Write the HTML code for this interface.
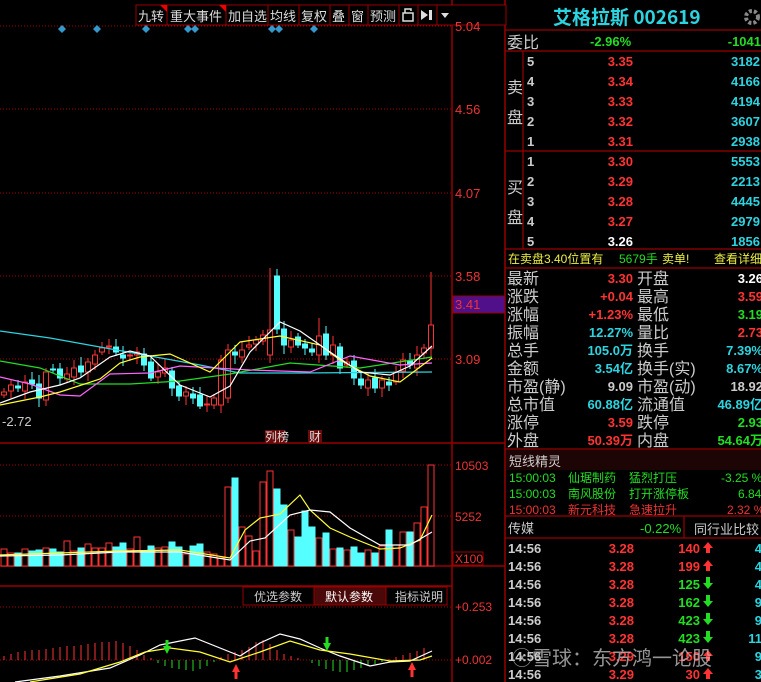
<!DOCTYPE html>
<html><head><meta charset="utf-8"><style>
html,body{margin:0;padding:0;background:#000;width:761px;height:682px;overflow:hidden}
svg{display:block}
text{font-family:"Liberation Sans","Noto Sans CJK SC",sans-serif}
.c{font-family:"Noto Sans CJK SC","WenQuanYi Zen Hei",sans-serif}
.n{font-family:"Liberation Sans",sans-serif;font-weight:bold}
</style></head><body>
<svg id="s" width="761" height="682" xmlns="http://www.w3.org/2000/svg">
<rect width="761" height="682" fill="#000"/>
<g stroke="#a00" stroke-dasharray="1,2" stroke-width="1">
<line x1="0" y1="26" x2="452" y2="26"/>
<line x1="0" y1="109" x2="452" y2="109"/>
<line x1="0" y1="193" x2="452" y2="193"/>
<line x1="0" y1="276" x2="452" y2="276"/>
<line x1="0" y1="359" x2="452" y2="359"/>
<line x1="0" y1="465" x2="452" y2="465"/>
<line x1="0" y1="516" x2="452" y2="516"/>
<line x1="0" y1="607" x2="452" y2="607"/>
<line x1="0" y1="660" x2="452" y2="660"/>
</g>
<g stroke="#900" stroke-width="1.5">
<line x1="452" y1="0" x2="452" y2="682"/>
<line x1="0" y1="443" x2="505" y2="443"/>
<line x1="0" y1="566" x2="505" y2="566"/>
<line x1="0" y1="586" x2="452" y2="586"/>
<line x1="505" y1="0" x2="505" y2="682"/>
</g>
<g class="c" font-size="13" fill="#ddd">
<rect x="136" y="5" width="370" height="20" fill="#000" stroke="#900"/>
<g stroke="#900"><line x1="167" y1="5" x2="167" y2="25"/><line x1="226" y1="5" x2="226" y2="25"/><line x1="268" y1="5" x2="268" y2="25"/><line x1="299" y1="5" x2="299" y2="25"/><line x1="330" y1="5" x2="330" y2="25"/><line x1="349" y1="5" x2="349" y2="25"/><line x1="368" y1="5" x2="368" y2="25"/><line x1="399" y1="5" x2="399" y2="25"/><line x1="418" y1="5" x2="418" y2="25"/><line x1="437" y1="5" x2="437" y2="25"/></g>
<polygon points="160,5 167,5 167,12" fill="#e00"/><polygon points="219,5 226,5 226,12" fill="#e00"/>
<text x="138" y="21">九转</text><text x="170" y="21">重大事件</text><text x="228" y="21">加自选</text><text x="270" y="21">均线</text><text x="301" y="21">复权</text><text x="332" y="21">叠</text><text x="351" y="21">窗</text><text x="370" y="21">预测</text>
<rect x="403" y="13" width="10" height="8" fill="none" stroke="#ddd" stroke-width="1.5"/><path d="M405,13 v-4 h6 v2" fill="none" stroke="#ddd" stroke-width="1.5"/>
<polygon points="421,10 428,15 421,20" fill="#ddd"/><rect x="429" y="10" width="3" height="10" fill="#ddd"/>
<polygon points="441,13 449,13 445,18" fill="#ddd"/>
</g>
<g fill="#39c"><g id="dm"></g></g>
<g font-size="13" fill="#e33">
<text x="455" y="31">5.04</text><text x="455" y="114">4.56</text><text x="455" y="198">4.07</text><text x="455" y="281">3.58</text><text x="455" y="364">3.09</text>
<rect x="453" y="296" width="52" height="17" fill="#50108a" stroke="#900"/><text x="455" y="309">3.41</text>
<text x="455" y="470" font-size="12">10503</text><text x="455" y="521" font-size="12">5252</text>
<rect x="453" y="552" width="30" height="13" fill="none" stroke="#900"/><text x="455" y="563" font-size="12">X100</text>
<text x="455" y="611" font-size="12">+0.253</text><text x="455" y="664" font-size="12">+0.002</text>
</g>
<text x="2" y="426" font-size="13" fill="#ccc">-2.72</text>
<g class="c" font-size="12"><rect x="265" y="430" width="20" height="13" fill="#6a0a0a"/><text x="265" y="441" fill="#ddd">列榜</text><rect x="308" y="430" width="14" height="13" fill="#6a0a0a"/><text x="309" y="441" fill="#ddd">财</text></g>
<g class="c" font-size="12">
<rect x="243" y="587" width="71" height="18" fill="#000" stroke="#900"/><text x="254" y="601" fill="#ccc">优选参数</text>
<rect x="314" y="587" width="72" height="18" fill="#4a0808" stroke="#900"/><text x="325" y="601" fill="#fff">默认参数</text>
<rect x="386" y="587" width="61" height="18" fill="#000" stroke="#900"/><text x="395" y="601" fill="#ccc">指标说明</text>
</g>
<g id="chart"></g>
<text x="553" y="24" class="c" font-size="19" font-weight="bold" fill="#2cd4e0">艾格拉斯 002619</text>
<circle cx="752" cy="17" r="6" fill="none" stroke="#888" stroke-width="4" stroke-dasharray="3,2"/>
<g stroke="#900" stroke-width="1.2" fill="none">
<line x1="505" y1="30" x2="761" y2="30"/><line x1="505" y1="51" x2="761" y2="51"/><line x1="505" y1="151" x2="761" y2="151"/><line x1="505" y1="249" x2="761" y2="249"/><line x1="505" y1="268" x2="761" y2="268"/><line x1="523" y1="51" x2="523" y2="249"/>
<line x1="505" y1="449" x2="761" y2="449"/><line x1="505" y1="516" x2="761" y2="516"/><line x1="505" y1="538" x2="761" y2="538"/><line x1="684" y1="516" x2="684" y2="538"/>
</g>
<rect x="506" y="450" width="255" height="20" fill="#1e0505"/>
<g class="c" font-size="16" fill="#ccc">
<text x="507" y="48">委比</text><text x="507" y="93">卖</text><text x="507" y="123">盘</text><text x="507" y="193">买</text><text x="507" y="223">盘</text>
</g>
<g class="n" font-size="13">
<text x="590" y="46" fill="#2d2">-2.96%</text><text x="761" y="46" fill="#2d2" text-anchor="end">-1041</text>
<g fill="#ccc"><text x="527" y="66">5</text><text x="527" y="86">4</text><text x="527" y="106">3</text><text x="527" y="126">2</text><text x="527" y="146">1</text><text x="527" y="166">1</text><text x="527" y="186">2</text><text x="527" y="206">3</text><text x="527" y="226">4</text><text x="527" y="246">5</text></g>
<g fill="#f33" text-anchor="end"><text x="633" y="66">3.35</text><text x="633" y="86">3.34</text><text x="633" y="106">3.33</text><text x="633" y="126">3.32</text><text x="633" y="146">3.31</text><text x="633" y="166">3.30</text><text x="633" y="186">3.29</text><text x="633" y="206">3.28</text><text x="633" y="226">3.27</text><text x="633" y="246" fill="#fff">3.26</text></g>
<g fill="#2cd4e0"><text x="731" y="66">3182</text><text x="731" y="86">4166</text><text x="731" y="106">4194</text><text x="731" y="126">3607</text><text x="731" y="146">2938</text><text x="731" y="166">5553</text><text x="731" y="186">2213</text><text x="731" y="206">4445</text><text x="731" y="226">2979</text><text x="731" y="246">1856</text></g>
</g>
<g class="c" font-size="12"><text x="508" y="263" fill="#ee4">在卖盘3.40位置有</text><text x="619" y="263" fill="#2d2">5679手</text><text x="662" y="263" fill="#ee4">卖单!</text><text x="714" y="263" fill="#ee4">查看详细</text></g>
<g class="c" font-size="16" fill="#ccc" id="lab"></g>
<g class="n" font-size="13" id="val"></g>
<text x="509" y="466" class="c" font-size="13" fill="#ccc">短线精灵</text>
<g font-size="12" class="c">
<text x="509" y="482" fill="#2d2">15:00:03</text><text x="568" y="482" fill="#2d2">仙琚制药</text><text x="629" y="482" fill="#2d2">猛烈打压</text><text x="721" y="482" fill="#2d2">-3.25 %</text>
<text x="509" y="498" fill="#2d2">15:00:03</text><text x="568" y="498" fill="#2d2">南风股份</text><text x="629" y="498" fill="#2d2">打开涨停板</text><text x="738" y="498" fill="#2d2">6.84</text>
<text x="509" y="514" fill="#e33">15:00:03</text><text x="568" y="514" fill="#e33">新元科技</text><text x="629" y="514" fill="#e33">急速拉升</text><text x="727" y="514" fill="#e33">2.32 %</text>
<text x="508" y="533" fill="#ccc" font-size="13">传媒</text><text x="640" y="533" fill="#2d2" font-size="13">-0.22%</text><text x="694" y="534" fill="#ccc" font-size="13">同行业比较</text>
</g>
<g id="ticks" class="n" font-size="13"></g>
<text x="512" y="665" class="c" font-size="20" fill="#bbb" opacity="0.8">ⓧ雪球：东方鸿一论股</text>
</svg>
<script>
var NS="http://www.w3.org/2000/svg",ch=document.getElementById('chart');
function el(t,a,p){var e=document.createElementNS(NS,t);for(var k in a)e.setAttribute(k,a[k]);(p||ch).appendChild(e);return e;}
[62,97,146,188,195,272,279,314].forEach(function(x){el('polygon',{points:(x-4)+',29 '+x+',25 '+(x+4)+',29 '+x+',33',fill:'#39c'},document.getElementById('dm'));});
var C=[392,385,388,382,384,398,372,370,378,374,368,372,362,355,348,346,352,358,355,352,365,378,372,368,388,396,392,398,406,404,398,360,352,355,350,345,340,335,330,329,345,340,345,348,352,336,355,345,368,362,378,385,380,388,380,385,372,360,365,355,348,325];
var O=[];for(var i=0;i<C.length;i++){O[i]=i?C[i-1]+((i*37)%7-3):395;}
O[32]=398;C[32]=350;O[39]=276;C[39]=329;O[38]=355;O[31]=405;
for(var i=0;i<C.length;i++){var x=i*7+4,o=O[i],c=C[i],up=c<o,t=Math.min(o,c),b=Math.max(o,c);if(b-t<1)b=t+1;
var h=t-4-(i*13)%6,l=b+3+(i*11)%7;if(i==38)h=268;if(i==61)h=272;if(i==45)h=318;
var col=up?'#f33':'#5ff';el('line',{x1:x,y1:h,x2:x,y2:l,stroke:col});
el('rect',{x:x-2.5,y:t,width:5,height:b-t,fill:up?'#000':col,stroke:col,'stroke-width':1});}
function ma(pts,col){el('polyline',{points:pts,fill:'none',stroke:col,'stroke-width':1.2});}
ma('0,331 50,338 100,347 150,356 200,365 240,373 300,373 432,372','#2cd4e0');
ma('0,361 40,368 80,384 130,384 180,381 230,374 290,363 360,368 432,357','#2d2');
ma('0,377 30,384 60,395 80,396 110,374 150,373 180,366 250,370 310,372 350,356 400,365 432,363','#f6f');
ma('0,405 40,397 60,392 100,379 120,363 140,357 170,354 210,372 240,342 280,336 320,345 340,360 370,376 400,382 432,358','#ff3');
ma('0,403 30,392 60,385 80,378 110,357 130,351 150,356 180,385 210,397 230,386 250,352 280,322 300,331 330,352 360,372 390,375 410,366 432,346','#fff');
var V=[17,13,13,17,15,16,18,17,14,25,15,18,22,18,18,23,19,23,17,29,15,20,18,19,24,19,12,20,22,14,12,8,79,88,39,30,15,84,95,77,61,36,29,55,39,28,33,17,18,16,19,13,16,13,20,36,21,34,34,43,59,101];
for(var i=0;i<V.length;i++){var x=i*7+4,up=C[i]<O[i],col=up?'#f33':'#5ff';el('rect',{x:x-3,y:566-V[i],width:6,height:V[i],fill:up?'#000':col,stroke:col});}
ma('0,555 60,553 120,551 180,550 230,558 245,530 260,518 280,514 300,495 310,510 330,528 350,537 380,549 400,548 420,540 432,515','#ff3');
ma('0,556 60,555 120,552 180,552 230,560 250,541 265,538 290,515 310,510 330,512 350,528 380,545 410,545 432,532','#fff');
var vals=[4,6,8,9,10,10,11,12,13,14,14,15,16,17,18,18,19,17,14,10,5,2,-3,-6,-8,-9,-10,-11,-9,-6,-2,3,6,8,10,13,18,20,16,10,6,4,2,0,-3,-6,-9,-11,-12,-12,-10,-8,-6,-4,-2,1,3,5,7,9,12];
for(var i=0;i<62;i++){var x=i*7+4,v=vals[i]||0;el('line',{x1:x,y1:660,x2:x,y2:660-v,stroke:v>=0?'#f33':'#2d2'});}
ma('15,682 60,676 110,668 140,655 160,645 195,638 240,656 260,643 280,634 300,639 320,648 340,656 370,666 390,662 410,661 432,651','#fff');
ma('30,682 80,674 120,662 145,652 170,648 200,652 230,662 260,652 290,641 320,650 350,654 390,661 420,660 432,656','#ff3');
el('polygon',{points:'163,646 171,646 167,654',fill:'#2d2'});el('rect',{x:165.5,y:640,width:3,height:7,fill:'#2d2'});
el('polygon',{points:'323,643 331,643 327,651',fill:'#2d2'});el('rect',{x:325.5,y:637,width:3,height:7,fill:'#2d2'});
el('polygon',{points:'232,672 240,672 236,664',fill:'#f33'});el('rect',{x:234.5,y:671,width:3,height:8,fill:'#f33'});
el('polygon',{points:'408,670 416,670 412,662',fill:'#f33'});el('rect',{x:410.5,y:669,width:3,height:8,fill:'#f33'});
var L=[['最新','开盘'],['涨跌','最高'],['涨幅','最低'],['振幅','量比'],['总手','换手'],['金额','换手(实)'],['市盈(静)','市盈(动)'],['总市值','流通值'],['涨停','跌停'],['外盘','内盘']];
var Vv=[['3.30','#f33','3.26','#fff'],['+0.04','#f33','3.59','#f33'],['+1.23%','#f33','3.19','#2d2'],['12.27%','#2cd4e0','2.73','#f33'],['105.0万','#2cd4e0','7.39%','#2cd4e0'],['3.54亿','#2cd4e0','8.67%','#2cd4e0'],['9.09','#ccc','18.92','#ccc'],['60.88亿','#2cd4e0','46.89亿','#2cd4e0'],['3.59','#f33','2.93','#2d2'],['50.39万','#f33','54.64万','#2d2']];
var lab=document.getElementById('lab'),val=document.getElementById('val');
for(var i=0;i<10;i++){var y=284+i*18;el('text',{x:507,y:y},lab).textContent=L[i][0];el('text',{x:637,y:y},lab).textContent=L[i][1];
el('text',{x:633,y:y-1,fill:Vv[i][1],'text-anchor':'end'},val).textContent=Vv[i][0];
el('text',{x:763,y:y-1,fill:Vv[i][3],'text-anchor':'end'},val).textContent=Vv[i][2];}
var T=[['3.28','140',1,'4'],['3.28','199',1,'4'],['3.28','125',0,'4'],['3.28','162',0,'9'],['3.28','423',0,'9'],['3.28','423',0,'11'],['3.29','150',1,'9'],['3.29','30',1,'3']];
var tk=document.getElementById('ticks');
for(var i=0;i<8;i++){var y=553+i*18;el('text',{x:508,y:y,fill:'#ccc'},tk).textContent='14:56';el('text',{x:634,y:y,fill:'#f33','text-anchor':'end'},tk).textContent=T[i][0];
var up=T[i][2],col=up?'#f33':'#2d2';el('text',{x:700,y:y,fill:col,'text-anchor':'end'},tk).textContent=T[i][1];
if(up){el('polygon',{points:'703,'+(y-5)+' 713,'+(y-5)+' 708,'+(y-11),fill:col},tk);el('rect',{x:706,y:y-6,width:4,height:6,fill:col},tk);}
else{el('polygon',{points:'703,'+(y-6)+' 713,'+(y-6)+' 708,'+y,fill:col},tk);el('rect',{x:706,y:y-12,width:4,height:6,fill:col},tk);}
el('text',{x:762,y:y,fill:'#2cd4e0','text-anchor':'end'},tk).textContent=T[i][3];}
</script>
</body></html>
